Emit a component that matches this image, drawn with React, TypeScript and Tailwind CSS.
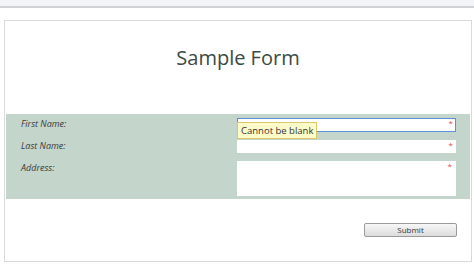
export default function App() {
  return (
    <div className="w-[474px] h-[271px] bg-white overflow-hidden font-['Open_Sans',sans-serif]">
      <div className="h-[8px] bg-[#f3f4f6] border-b-2 border-[#cfd1d5]" />
      <div className="mt-[12px] ml-[4px] w-[468px] h-[242px] border border-[#dadada] flex flex-col">
        <div className="h-[93px] flex justify-center pt-[27px]">
          <h1 className="text-[20px] text-[#3b4a45] leading-none">Sample Form</h1>
        </div>
        <div className="mx-[1px] h-[85px] bg-[#c4d5cb] pt-[4px] pl-[15px] pr-[14px] flex flex-col gap-[8px]">
          <div className="flex items-start">
            <label className="flex-1 italic text-[9px] text-[#3a3a3a] leading-none pt-[1px]">First Name:</label>
            <div className="relative w-[219px] h-[14px] bg-white border border-[#5d8fd4]">
              <span className="absolute right-[2px] top-[0px] text-[8px] leading-none text-[#e04848]">*</span>
              <div className="absolute left-[-1px] top-[3px] z-10 h-[17px] px-[3px] flex items-center bg-[#fdfbc8] border border-[#dcc66a] text-[9.5px] text-[#333] leading-none whitespace-nowrap">
                Cannot be blank
              </div>
            </div>
          </div>
          <div className="flex items-start">
            <label className="flex-1 italic text-[9px] text-[#3a3a3a] leading-none pt-[1px]">Last Name:</label>
            <div className="relative w-[219px] h-[13px] bg-white">
              <span className="absolute right-[3px] top-[1px] text-[8px] leading-none text-[#e04848]">*</span>
            </div>
          </div>
          <div className="flex items-start">
            <label className="flex-1 italic text-[9px] text-[#3a3a3a] leading-none pt-[2px]">Address:</label>
            <div className="relative w-[219px] h-[35px] bg-white">
              <span className="absolute right-[4px] top-[1px] text-[8px] leading-none text-[#e04848]">*</span>
            </div>
          </div>
        </div>
        <div className="flex justify-end pr-[14px] pt-[24px]">
          <button className="w-[93px] h-[14px] rounded-[2px] border border-[#9a9a9a] bg-gradient-to-b from-[#f7f7f7] to-[#dcdcdc] text-[8px] font-medium text-[#333] leading-none flex items-center justify-center">
            Submit
          </button>
        </div>
      </div>
    </div>
  )
}
